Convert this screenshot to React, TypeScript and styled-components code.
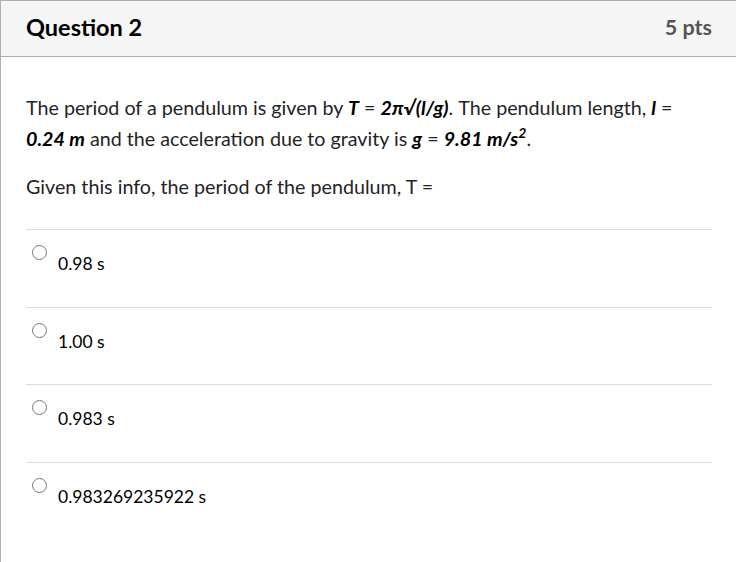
import styled, { createGlobalStyle } from 'styled-components'

const GlobalStyle = createGlobalStyle`
    body {
        margin: 0;
        background: #ffffff;
        font-family: Lato, "Liberation Sans", sans-serif;
        color: #2d3b45;
    }
`

const answers = ['0.98 s', '1.00 s', '0.983 s', '0.983269235922 s']

function App() {
    return (
        <>
            <GlobalStyle />
            <Panel>
                <Header>
                    <Title>Question 2</Title>
                    <Points>5 pts</Points>
                </Header>
                <Body>
                    <Text>
                        The period of a pendulum is given by <b><i>T</i></b> = <b><i>2π√(l/g)</i></b>. The pendulum length, <b><i>l</i></b> =
                        {' '}<b><i>0.24 m</i></b> and the acceleration due to gravity is <b><i>g</i></b> = <b><i>9.81 m/s<Sup>2</Sup></i></b>.
                    </Text>
                    <Text>Given this info, the period of the pendulum, T =</Text>
                    <Answers>
                        {answers.map((a) => (
                            <Answer key={a}>
                                <Radio />
                                <AnswerLabel>{a}</AnswerLabel>
                            </Answer>
                        ))}
                    </Answers>
                </Body>
            </Panel>
        </>
    )
}

export default App

const Panel = styled.div`
    width: 760px;
    height: 562px;
    box-sizing: border-box;
    border: 1px solid #b0b0b0;
    border-bottom: none;
    overflow: hidden;
`

const Header = styled.div`
    height: 56px;
    box-sizing: border-box;
    background: #f5f5f5;
    border-bottom: 1px solid #b0b0b0;
    display: flex;
    align-items: center;
    justify-content: space-between;
    padding: 0 47px 3px 25px;
`

const Title = styled.span`
    font-size: 23.5px;
    font-weight: 700;
    color: #000000;
`

const Points = styled.span`
    font-size: 21.5px;
    font-weight: 700;
    color: #555555;
`

const Body = styled.div`
    padding: 35px 47px 0 25px;
`

const Text = styled.p`
    margin: 0 0 17px;
    font-size: 19.7px;
    line-height: 31px;
    color: #1f2328;

    b {
        color: #000000;
    }
`

const Sup = styled.sup`
    font-size: 14px;
    line-height: 0;
    vertical-align: 8px;
`

const Answers = styled.div`
    margin-top: 27px;
`

const Answer = styled.div`
    border-top: 1px solid #dcdcdc;
    height: 76.5px;
    display: flex;
    align-items: flex-start;
    padding-left: 6px;
`

const Radio = styled.span`
    width: 13px;
    height: 13px;
    border: 1px solid #777777;
    border-radius: 50%;
    margin-top: 15px;
    flex-shrink: 0;
`

const AnswerLabel = styled.span`
    margin: 24px 0 0 11px;
    font-size: 17.5px;
    line-height: 20px;
    color: #000000;
`
